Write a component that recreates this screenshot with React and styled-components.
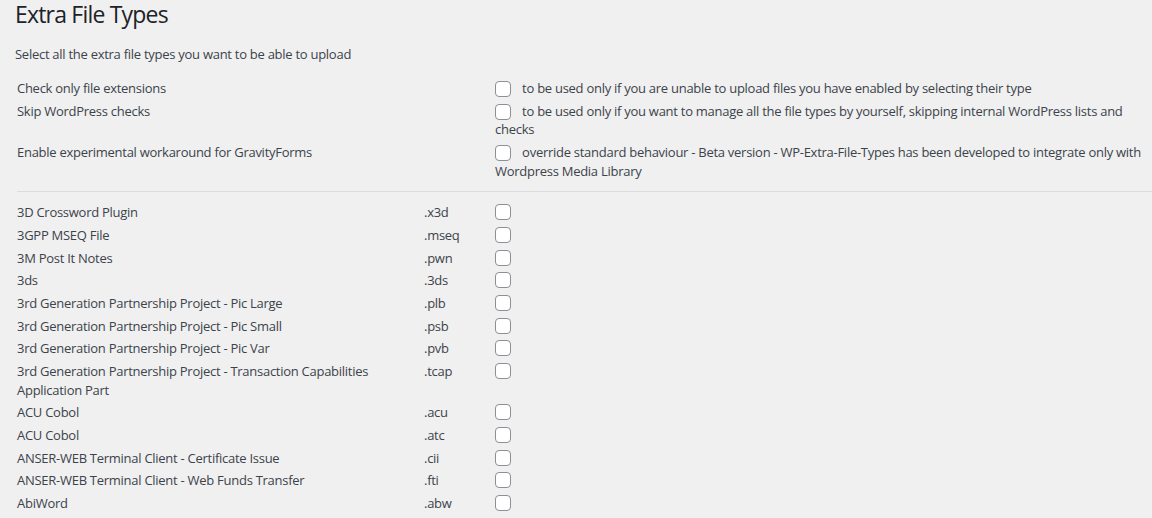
import React from 'react';
import styled, { createGlobalStyle } from 'styled-components';

const COLORS = {
    bg: '#f0f0f1',
    text: '#3c434a',
    heading: '#1d2327',
    border: '#8c8f94',
    divider: '#dcdcde',
};

const OPTIONS = [
    {
        id: 'ext',
        label: 'Check only file extensions',
        help: 'to be used only if you are unable to upload files you have enabled by selecting their type',
    },
    {
        id: 'skip',
        label: 'Skip WordPress checks',
        help: 'to be used only if you want to manage all the file types by yourself, skipping internal WordPress lists and checks',
    },
    {
        id: 'gravity',
        label: 'Enable experimental workaround for GravityForms',
        help: 'override standard behaviour - Beta version - WP-Extra-File-Types has been developed to integrate only with Wordpress Media Library',
    },
];

const FILE_TYPES = [
    ['3D Crossword Plugin', '.x3d'],
    ['3GPP MSEQ File', '.mseq'],
    ['3M Post It Notes', '.pwn'],
    ['3ds', '.3ds'],
    ['3rd Generation Partnership Project - Pic Large', '.plb'],
    ['3rd Generation Partnership Project - Pic Small', '.psb'],
    ['3rd Generation Partnership Project - Pic Var', '.pvb'],
    ['3rd Generation Partnership Project - Transaction Capabilities Application Part', '.tcap'],
    ['ACU Cobol', '.acu'],
    ['ACU Cobol', '.atc'],
    ['ANSER-WEB Terminal Client - Certificate Issue', '.cii'],
    ['ANSER-WEB Terminal Client - Web Funds Transfer', '.fti'],
    ['AbiWord', '.abw'],
];

const GlobalStyle = createGlobalStyle`
    * { box-sizing: border-box; }
    body {
        margin: 0;
        background: ${COLORS.bg};
        color: ${COLORS.text};
        font-family: 'Open Sans', 'Noto Sans', sans-serif;
        font-size: 13px;
        letter-spacing: -0.27px;
        overflow: hidden;
    }
`;

const Wrap = styled.div`
    padding: 0 0 0 15px;
`;

const Title = styled.h1`
    margin: 0;
    padding: 0;
    font-size: 23px;
    font-weight: 400;
    letter-spacing: -0.8px;
    line-height: 29px;
    color: ${COLORS.heading};
`;

const Intro = styled.p`
    margin: 16px 0 13px;
    line-height: 19px;
`;

const OptionRow = styled.div`
    display: grid;
    grid-template-columns: 478px 647px;
    padding: 2px 0 2px 2px;
    line-height: 18.67px;
`;

const Help = styled.div`
    margin: 0;
`;

const Box = styled.span`
    display: inline-block;
    width: 16px;
    height: 16px;
    margin: 0 8px 0 0;
    vertical-align: -4px;
    background: #fff;
    border: 1px solid ${COLORS.border};
    border-radius: 4px;
`;

const Divider = styled.hr`
    margin: 9px 0 9px 2px;
    border: 0;
    border-top: 1px solid ${COLORS.divider};
`;

const FileRow = styled.div`
    display: grid;
    grid-template-columns: 407px 71px 16px;
    align-items: start;
    padding: 2px 0 2px 2px;
    line-height: 18.67px;
`;

const FileBox = styled(Box)`
    margin: 1px 0 0;
    vertical-align: top;
`;

const App = () => {
    return (
        <Wrap>
            <GlobalStyle />
            <Title>Extra File Types</Title>
            <Intro>Select all the extra file types you want to be able to upload</Intro>
            {OPTIONS.map((option) => (
                <OptionRow key={option.id}>
                    <div>{option.label}</div>
                    <Help>
                        <Box /> {option.help}
                    </Help>
                </OptionRow>
            ))}
            <Divider />
            {FILE_TYPES.map(([name, ext]) => (
                <FileRow key={ext}>
                    <div>{name}</div>
                    <div>{ext}</div>
                    <FileBox />
                </FileRow>
            ))}
        </Wrap>
    );
};

export default App;
